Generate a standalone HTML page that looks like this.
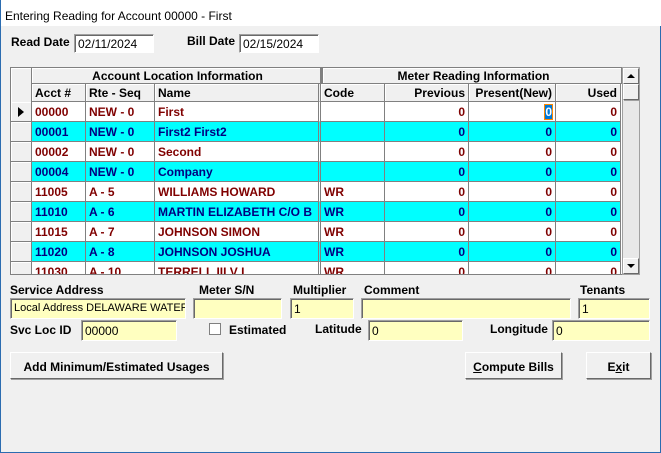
<!DOCTYPE html>
<html><head><meta charset="utf-8"><style>
*{box-sizing:border-box;margin:0;padding:0}
body{width:661px;height:453px;background:#f0f0f0;font-family:"Liberation Sans",Arial,sans-serif;font-size:12px;position:relative;overflow:hidden}
.win{position:absolute;left:0;top:0;width:661px;height:453px;border:1px solid #2b6cb0;border-top:none;background:#f0f0f0}
.title{position:absolute;left:0;top:0;width:661px;height:26px;background:#fff;font-size:12px;padding:9px 0 0 4px;color:#000}
.a{position:absolute}
.lbl{position:absolute;font-weight:bold;font-size:12px;color:#000}
.inp{position:absolute;border:1px solid #a0a0a0;border-right-color:#fff;border-bottom-color:#fff;box-shadow:inset 1px 1px 0 #696969;background:#ffffc0;font-size:12px;padding:3px 0 0 3px;height:21px;white-space:nowrap;overflow:hidden}
.wh{background:#fff}
.grid{position:absolute;left:9px;top:67px;width:613px;height:208px;border:1px solid #808080;overflow:hidden;background:#fff}
.row{position:absolute;left:0;height:20px;display:flex}
.c{height:20px;border-right:1px solid #808080;border-bottom:1px solid #808080;font-weight:bold;padding:3px 0 0 3px;white-space:nowrap;overflow:hidden;flex:none}
.r{text-align:right;padding:3px 3px 0 0}
.h{background:#f0f0f0;color:#000;box-shadow:inset 1px 1px 0 #fff}
.sel{background:#f0f0f0;box-shadow:inset 1px 1px 0 #fff}
.red{color:#800000}.blue{color:#000080;background:#0ff}
.btn{position:absolute;background:#f0f0f0;border:1px solid #fff;border-right-color:#696969;border-bottom-color:#696969;box-shadow:1px 1px 0 #a0a0a0;font-weight:bold;font-size:12px;text-align:center;padding-top:7px}
</style></head><body>
<div class="win">
<div class="title">Entering Reading for Account 00000 - First</div>
<div class="lbl" style="left:10px;top:35px">Read Date</div>
<div class="inp wh" style="left:73px;top:34px;width:80px;height:19px;padding-top:2px;color:#000">02/11/2024</div>
<div class="lbl" style="left:186px;top:34px">Bill Date</div>
<div class="inp wh" style="left:238px;top:34px;width:80px;height:19px;padding-top:2px">02/15/2024</div>

<div class="grid">
 <div class="row" style="top:0">
  <div class="c sel" style="width:21px;height:35px"></div>
  <div class="c h" style="width:289px;text-align:center;height:16px;padding-top:1px">Account Location Information</div>
  <div class="c h" style="width:301px;text-align:center;height:16px;padding-top:1px;border-left:2px solid #808080">Meter Reading Information</div>
 </div>
 <div class="row" style="top:16px">
  <div style="width:21px;flex:none"></div>
  <div class="c h" style="width:54px;height:18px;padding-top:2px">Acct #</div>
  <div class="c h" style="width:69px;height:18px;padding-top:2px">Rte - Seq</div>
  <div class="c h" style="width:166px;height:18px;padding-top:2px;border-right:3px double #808080">Name</div>
  <div class="c h" style="width:64px;height:18px;padding-top:2px">Code</div>
  <div class="c h r" style="width:84px;height:18px;padding-top:2px">Previous</div>
  <div class="c h r" style="width:87px;height:18px;padding-top:2px">Present(New)</div>
  <div class="c h r" style="width:65px;height:18px;padding-top:2px">Used</div>
 </div>
 <div id="rows"></div>
 <div class="row" style="top:34px"><div class="c sel" style="width:21px;position:relative"><div style="position:absolute;left:7px;top:5px;width:0;height:0;border-left:6px solid #000;border-top:5px solid transparent;border-bottom:5px solid transparent"></div></div><div class="c red" style="width:54px">00000</div><div class="c red" style="width:69px">NEW - 0</div><div class="c red" style="width:166px;border-right:3px double #808080">First</div><div class="c red" style="width:64px"></div><div class="c red r" style="width:84px">0</div><div class="c red r" style="width:87px"><span style="background:#0078d7;color:#fff;outline:1px solid #f80">0</span></div><div class="c red r" style="width:65px">0</div></div>
 <div class="row" style="top:54px"><div class="c sel" style="width:21px"></div><div class="c blue" style="width:54px">00001</div><div class="c blue" style="width:69px">NEW - 0</div><div class="c blue" style="width:166px;border-right:3px double #808080">First2 First2</div><div class="c blue" style="width:64px"></div><div class="c blue r" style="width:84px">0</div><div class="c blue r" style="width:87px">0</div><div class="c blue r" style="width:65px">0</div></div>
 <div class="row" style="top:74px"><div class="c sel" style="width:21px"></div><div class="c red" style="width:54px">00002</div><div class="c red" style="width:69px">NEW - 0</div><div class="c red" style="width:166px;border-right:3px double #808080">Second</div><div class="c red" style="width:64px"></div><div class="c red r" style="width:84px">0</div><div class="c red r" style="width:87px">0</div><div class="c red r" style="width:65px">0</div></div>
 <div class="row" style="top:94px"><div class="c sel" style="width:21px"></div><div class="c blue" style="width:54px">00004</div><div class="c blue" style="width:69px">NEW - 0</div><div class="c blue" style="width:166px;border-right:3px double #808080">Company</div><div class="c blue" style="width:64px"></div><div class="c blue r" style="width:84px">0</div><div class="c blue r" style="width:87px">0</div><div class="c blue r" style="width:65px">0</div></div>
 <div class="row" style="top:114px"><div class="c sel" style="width:21px"></div><div class="c red" style="width:54px">11005</div><div class="c red" style="width:69px">A - 5</div><div class="c red" style="width:166px;border-right:3px double #808080">WILLIAMS HOWARD</div><div class="c red" style="width:64px">WR</div><div class="c red r" style="width:84px">0</div><div class="c red r" style="width:87px">0</div><div class="c red r" style="width:65px">0</div></div>
 <div class="row" style="top:134px"><div class="c sel" style="width:21px"></div><div class="c blue" style="width:54px">11010</div><div class="c blue" style="width:69px">A - 6</div><div class="c blue" style="width:166px;border-right:3px double #808080">MARTIN ELIZABETH C/O B</div><div class="c blue" style="width:64px">WR</div><div class="c blue r" style="width:84px">0</div><div class="c blue r" style="width:87px">0</div><div class="c blue r" style="width:65px">0</div></div>
 <div class="row" style="top:154px"><div class="c sel" style="width:21px"></div><div class="c red" style="width:54px">11015</div><div class="c red" style="width:69px">A - 7</div><div class="c red" style="width:166px;border-right:3px double #808080">JOHNSON SIMON</div><div class="c red" style="width:64px">WR</div><div class="c red r" style="width:84px">0</div><div class="c red r" style="width:87px">0</div><div class="c red r" style="width:65px">0</div></div>
 <div class="row" style="top:174px"><div class="c sel" style="width:21px"></div><div class="c blue" style="width:54px">11020</div><div class="c blue" style="width:69px">A - 8</div><div class="c blue" style="width:166px;border-right:3px double #808080">JOHNSON JOSHUA</div><div class="c blue" style="width:64px">WR</div><div class="c blue r" style="width:84px">0</div><div class="c blue r" style="width:87px">0</div><div class="c blue r" style="width:65px">0</div></div>
 <div class="row" style="top:194px"><div class="c sel" style="width:21px"></div><div class="c red" style="width:54px">11030</div><div class="c red" style="width:69px">A - 10</div><div class="c red" style="width:166px;border-right:3px double #808080">TERRELL III V L</div><div class="c red" style="width:64px">WR</div><div class="c red r" style="width:84px">0</div><div class="c red r" style="width:87px">0</div><div class="c red r" style="width:65px">0</div></div>
</div>
<!-- scrollbar -->
<div class="a" style="left:621px;top:67px;width:18px;height:208px;background:#e8e8e8;border:1px solid #a0a0a0"></div>
<div class="btn" style="left:622px;top:68px;width:16px;height:16px;padding:0"><div style="margin:5px auto 0;width:0;height:0;border-bottom:4px solid #000;border-left:4px solid transparent;border-right:4px solid transparent"></div></div>
<div class="btn" style="left:622px;top:84px;width:16px;height:16px;padding:0"></div>
<div class="btn" style="left:622px;top:258px;width:16px;height:16px;padding:0"><div style="margin:5px auto 0;width:0;height:0;border-top:4px solid #000;border-left:4px solid transparent;border-right:4px solid transparent"></div></div>

<div class="lbl" style="left:9px;top:283px">Service Address</div>
<div class="lbl" style="left:198px;top:283px">Meter S/N</div>
<div class="lbl" style="left:292px;top:283px">Multiplier</div>
<div class="lbl" style="left:363px;top:283px">Comment</div>
<div class="lbl" style="left:579px;top:283px">Tenants</div>
<div class="inp" style="left:9px;top:298px;width:176px;font-size:11px">Local Address DELAWARE WATER</div>
<div class="inp" style="left:192px;top:298px;width:89px"></div>
<div class="inp" style="left:289px;top:298px;width:64px">1</div>
<div class="inp" style="left:360px;top:298px;width:210px"></div>
<div class="inp" style="left:577px;top:298px;width:72px">1</div>

<div class="lbl" style="left:9px;top:323px">Svc Loc ID</div>
<div class="inp" style="left:80px;top:320px;width:96px">00000</div>
<div class="a" style="left:208px;top:323px;width:12px;height:12px;background:#fff;border:1px solid #808080"></div>
<div class="lbl" style="left:228px;top:323px">Estimated</div>
<div class="lbl" style="left:314px;top:322px">Latitude</div>
<div class="inp" style="left:367px;top:320px;width:95px">0</div>
<div class="lbl" style="left:489px;top:322px">Longitude</div>
<div class="inp" style="left:551px;top:320px;width:98px">0</div>

<div class="btn" style="left:9px;top:352px;width:213px;height:27px">Add Minimum/Estimated Usages</div>
<div class="btn" style="left:464px;top:352px;width:97px;height:27px"><u>C</u>ompute Bills</div>
<div class="btn" style="left:585px;top:352px;width:65px;height:27px">E<u>x</u>it</div>
</div>
</body></html>
